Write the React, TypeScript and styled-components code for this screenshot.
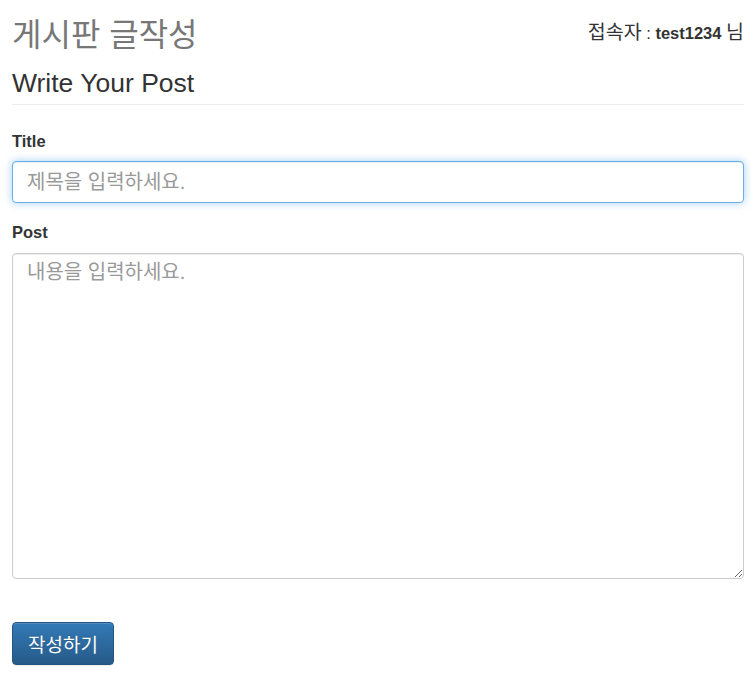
import React from "react";
import styled, { createGlobalStyle } from "styled-components";

const GlobalStyle = createGlobalStyle`
  * { box-sizing: border-box; }
  body {
    margin: 0;
    background: #fff;
    color: #333;
    font-family: "Liberation Sans", "Noto Sans CJK KR", Arial, sans-serif;
    font-size: 16px;
    line-height: 1.42857;
  }
`;

const Page = styled.div`
  padding: 16px 11px 30px 12px;
`;

const TopBar = styled.div`
  display: flex;
  justify-content: space-between;
  align-items: flex-start;
`;

const BoardTitle = styled.h2`
  margin: 0;
  font-size: 32px;
  font-weight: 400;
  line-height: 1.2;
  color: #777;
`;

const UserInfo = styled.div`
  margin-top: 3px;
  font-size: 16.5px;
  color: #333;
  b { font-weight: 700; }
`;

const Ko = styled.span`
  font-size: 19.5px;
`;

const PageHeader = styled.h3`
  margin: 15px 0 0;
  padding-bottom: 5px;
  font-size: 26.5px;
  font-weight: 400;
  line-height: 1.1;
  color: #333;
  border-bottom: 1px solid #eee;
`;

const Form = styled.form`
  margin-top: 25px;
  display: flex;
  flex-direction: column;
`;

const Group = styled.div`
  margin-bottom: 18px;
`;

const Label = styled.label`
  display: block;
  margin-bottom: 8px;
  font-size: 16.5px;
  font-weight: 700;
  color: #333;
`;

const Input = styled.input`
  display: block;
  width: 100%;
  height: 42px;
  padding: 6px 14px;
  font-family: inherit;
  font-size: 20px;
  color: #555;
  background: #fff;
  border: 1px solid #66afe9;
  border-radius: 4px;
  outline: 0;
  box-shadow: inset 0 1px 1px rgba(0, 0, 0, 0.075), 0 0 8px rgba(102, 175, 233, 0.6);
  &::placeholder { color: #999; }
`;

const TextArea = styled.textarea`
  display: block;
  width: 100%;
  height: 326px;
  padding: 4px 14px;
  font-family: inherit;
  font-size: 20px;
  line-height: 1.42857;
  color: #555;
  background: #fff;
  border: 1px solid #ccc;
  border-radius: 4px;
  outline: 0;
  resize: vertical;
  box-shadow: inset 0 1px 1px rgba(0, 0, 0, 0.075);
  &::placeholder { color: #999; }
`;

const Submit = styled.button`
  align-self: flex-start;
  margin-top: 25px;
  width: 102px;
  height: 43px;
  padding: 0;
  font-family: inherit;
  font-size: 19px;
  color: #fff;
  background-image: linear-gradient(to bottom, #337ab7 0, #265a88 100%);
  border: 1px solid #245580;
  border-radius: 4px;
  text-shadow: 0 -1px 0 rgba(0, 0, 0, 0.2);
  box-shadow: inset 0 1px 0 rgba(255, 255, 255, 0.15), 0 1px 1px rgba(0, 0, 0, 0.075);
  cursor: pointer;
`;

export default function App() {
  return (
    <>
      <GlobalStyle />
      <Page>
        <TopBar>
          <BoardTitle>게시판 글작성</BoardTitle>
          <UserInfo>
            <Ko>접속자</Ko> : <b>test1234</b> <Ko>님</Ko>
          </UserInfo>
        </TopBar>
        <PageHeader>Write Your Post</PageHeader>
        <Form onSubmit={(e) => e.preventDefault()}>
          <Group>
            <Label htmlFor="title">Title</Label>
            <Input id="title" type="text" placeholder="제목을 입력하세요." autoFocus />
          </Group>
          <Group>
            <Label htmlFor="post">Post</Label>
            <TextArea id="post" placeholder="내용을 입력하세요." />
          </Group>
          <Submit type="submit">작성하기</Submit>
        </Form>
      </Page>
    </>
  );
}
